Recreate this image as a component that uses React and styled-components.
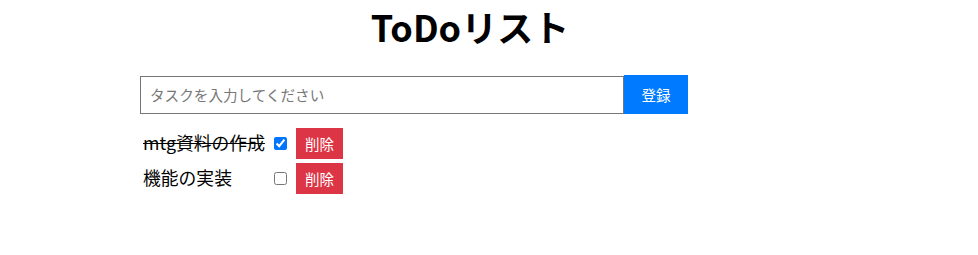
import React, { useState } from "react";
import styled, { createGlobalStyle } from "styled-components";

const Global = createGlobalStyle`
  body {
    margin: 8px;
    font-family: "Noto Sans CJK JP", "Noto Sans", sans-serif;
    background: #fff;
    color: #000;
  }
`;

const Page = styled.div`
  width: 924px;
`;

const Title = styled.h1`
  margin: 0;
  height: 56px;
  line-height: 36px;
  text-align: center;
  font-size: 36px;
  font-weight: 700;
`;

const Form = styled.div`
  display: flex;
  align-items: center;
  margin: 11px 0 0 132px;
`;

const TaskInput = styled.input`
  box-sizing: border-box;
  width: 484px;
  height: 38px;
  border: 1px solid #767676;
  border-radius: 0;
  padding: 0 9px;
  font-family: "Noto Sans CJK JP", sans-serif;
  font-size: 14.6px;
  outline: none;
  &::placeholder {
    color: #777;
  }
`;

const AddButton = styled.button`
  box-sizing: border-box;
  width: 64px;
  height: 39px;
  border: none;
  border-radius: 0;
  background: #007bff;
  color: #fff;
  font-family: "Noto Sans CJK JP", sans-serif;
  font-size: 14.5px;
  padding: 0;
`;

const List = styled.ul`
  list-style: none;
  margin: 14px 0 0 132px;
  padding: 0;
  display: flex;
  flex-direction: column;
  gap: 4px;
`;

const Item = styled.li`
  display: flex;
  align-items: center;
  height: 31px;
`;

const ItemText = styled.span`
  width: 131px;
  padding: 0 0 4px 3px;
  font-size: 17.8px;
  white-space: nowrap;
  text-decoration: ${(p) => (p.$done ? "line-through" : "none")};
  text-decoration-thickness: 1px;
`;

const Check = styled.input`
  width: 13px;
  height: 13px;
  margin: 0 9px 0 0;
`;

const DeleteButton = styled.button`
  box-sizing: border-box;
  width: 47px;
  height: 31px;
  border: none;
  border-radius: 0;
  background: #dc3545;
  color: #fff;
  font-family: "Noto Sans CJK JP", sans-serif;
  font-size: 14.5px;
  padding: 0;
`;

export default function App() {
  const [todos, setTodos] = useState([
    { text: "mtg資料の作成", done: true },
    { text: "機能の実装", done: false },
  ]);
  const toggle = (i) =>
    setTodos((t) => t.map((x, j) => (j === i ? { ...x, done: !x.done } : x)));
  return (
    <Page>
      <Global />
      <Title>ToDoリスト</Title>
      <Form>
        <TaskInput placeholder="タスクを入力してください" />
        <AddButton>登録</AddButton>
      </Form>
      <List>
        {todos.map((t, i) => (
          <Item key={i}>
            <ItemText $done={t.done}>{t.text}</ItemText>
            <Check type="checkbox" checked={t.done} onChange={() => toggle(i)} />
            <DeleteButton>削除</DeleteButton>
          </Item>
        ))}
      </List>
    </Page>
  );
}
